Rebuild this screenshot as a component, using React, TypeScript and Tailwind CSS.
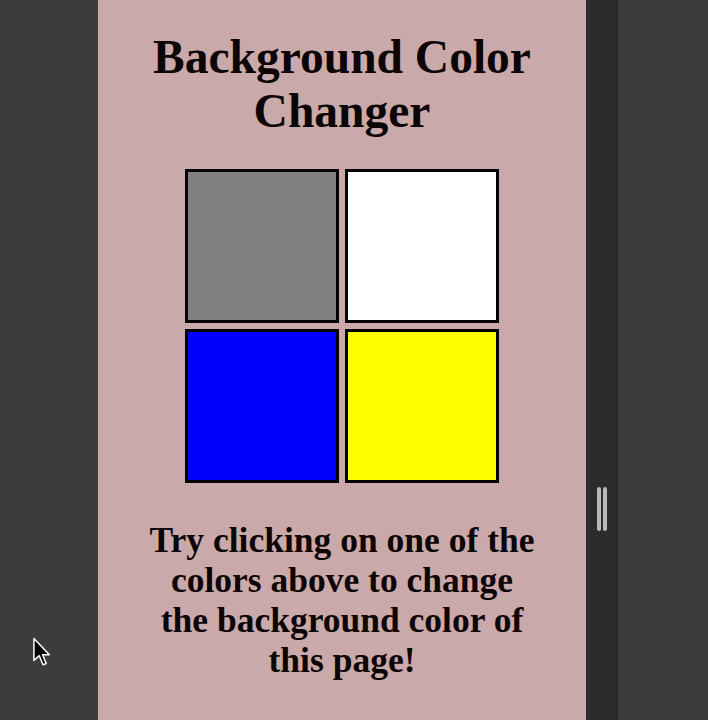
import React from 'react';

const swatches = [
  { name: 'gray', cls: 'bg-[#808080]' },
  { name: 'white', cls: 'bg-white' },
  { name: 'blue', cls: 'bg-[#0000ff]' },
  { name: 'yellow', cls: 'bg-[#ffff00]' },
];

const Cursor: React.FC = () => (
  <svg className="absolute left-[32px] top-[637px]" width="22" height="32" viewBox="0 0 20 30">
    <path
      d="M1.5 1.5 L1.5 22 L6.5 17.5 L10 26 L13 24.8 L9.6 16.6 L16 16.6 Z"
      fill="#000"
      stroke="#fff"
      strokeWidth="1.4"
      strokeLinejoin="round"
    />
  </svg>
);

const App: React.FC = () => {
  return (
    <div className="relative flex h-[720px] w-[708px] overflow-hidden bg-[#3c3c3c]" style={{ fontFamily: '"Liberation Serif", "Times New Roman", serif' }}>
      <div className="w-[98px] shrink-0 bg-[#3c3c3c]" />
      <div className="flex w-[488px] shrink-0 flex-col items-center bg-[#caa9aa] pt-[30px] text-[#0d0505]">
        <h1 className="text-center text-[47.5px] font-bold leading-[54px]">
          Background Color
          <br />
          Changer
        </h1>
        <div className="mt-[31px] grid grid-cols-[154px_154px] gap-[6px]">
          {swatches.map((s) => (
            <button key={s.name} className={`h-[154px] w-[154px] border-[3px] border-black ${s.cls}`} aria-label={s.name} />
          ))}
        </div>
        <p className="mt-[37px] w-[390px] text-center text-[35.5px] font-bold leading-[40px]">
          Try clicking on one of the colors above to change the background color of this page!
        </p>
      </div>
      <div className="flex w-[32px] shrink-0 justify-center bg-[#2b2b2b] pt-[487px]">
        <div className="flex h-[44px] gap-[2px]">
          <div className="h-full w-[4px] rounded-sm bg-[#b8b8b8]" />
          <div className="h-full w-[4px] rounded-sm bg-[#b8b8b8]" />
        </div>
      </div>
      <div className="flex-1 bg-[#3c3c3c]" />
      <Cursor />
    </div>
  );
};

export default App;
